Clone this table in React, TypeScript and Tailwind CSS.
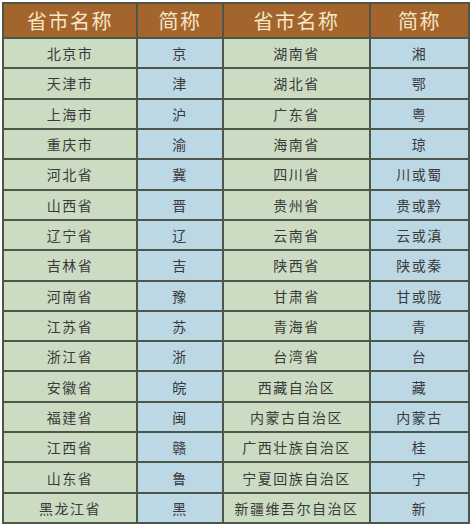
import React from "react";

const rows: [string, string, string, string][] = [
  ["北京市", "京", "湖南省", "湘"],
  ["天津市", "津", "湖北省", "鄂"],
  ["上海市", "沪", "广东省", "粤"],
  ["重庆市", "渝", "海南省", "琼"],
  ["河北省", "冀", "四川省", "川或蜀"],
  ["山西省", "晋", "贵州省", "贵或黔"],
  ["辽宁省", "辽", "云南省", "云或滇"],
  ["吉林省", "吉", "陕西省", "陕或秦"],
  ["河南省", "豫", "甘肃省", "甘或陇"],
  ["江苏省", "苏", "青海省", "青"],
  ["浙江省", "浙", "台湾省", "台"],
  ["安徽省", "皖", "西藏自治区", "藏"],
  ["福建省", "闽", "内蒙古自治区", "内蒙古"],
  ["江西省", "赣", "广西壮族自治区", "桂"],
  ["山东省", "鲁", "宁夏回族自治区", "宁"],
  ["黑龙江省", "黑", "新疆维吾尔自治区", "新"],
];

const headers = ["省市名称", "简称", "省市名称", "简称"];

export default function App() {
  return (
    <div className="w-[474px] h-[527px] bg-white" style={{ fontFamily: '"Noto Sans CJK SC", "Noto Sans", sans-serif' }}>
      <div className="ml-[2px] pt-[2px]">
        <div className="w-[468px] h-[522px] bg-[#4d564b] p-[2px] grid grid-cols-[132px_84px_145px_97px] grid-rows-[33px_repeat(16,1fr)] gap-[2px]">
          {headers.map((h, i) => (
            <div key={"h" + i} className="bg-[#a4652c] flex items-center justify-center text-[20px] text-[#f6e6c9] tracking-[1.5px] leading-none">
              {h}
            </div>
          ))}
          {rows.map((r, ri) =>
            r.map((c, ci) => (
              <div
                key={ri + "-" + ci}
                className={
                  "flex items-center justify-center text-[14px] text-[#3a3a3a] leading-none tracking-[1.5px] " +
                  (ci % 2 === 0 ? "bg-[#cbdcc3]" : "bg-[#bdd8e5]")
                }
              >
                {c}
              </div>
            ))
          )}
        </div>
      </div>
    </div>
  );
}
